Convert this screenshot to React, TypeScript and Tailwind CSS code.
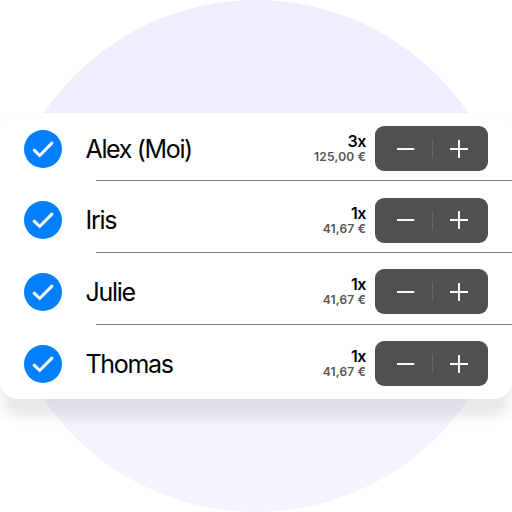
interface Participant {
  name: string;
  shares: number;
  amount: string;
  tracking: string;
}

const participants: Participant[] = [
  { name: "Alex (Moi)", shares: 3, amount: "125,00 €", tracking: "tracking-[-1.35px]" },
  { name: "Iris", shares: 1, amount: "41,67 €", tracking: "tracking-[-1.3px]" },
  { name: "Julie", shares: 1, amount: "41,67 €", tracking: "tracking-[-1.3px]" },
  { name: "Thomas", shares: 1, amount: "41,67 €", tracking: "tracking-[-1.3px]" },
];

export default function App() {
  return (
    <main className="relative flex h-[512px] w-[512px] flex-col overflow-hidden bg-white pt-[112.9px] font-['Inter',sans-serif]">
      <div className="absolute inset-0 rounded-full bg-linear-to-b from-[#efedfd] to-[#f4f4ff]" />
      <section className="relative h-[286.6px] w-full rounded-[18px] bg-white shadow-[0_20px_12px_-2px_rgba(0,0,0,0.085),0_0_2px_rgba(0,0,0,0.03)]">
        {participants.map((participant, index) => (
          <ParticipantRow
            key={participant.name}
            participant={participant}
            last={index === participants.length - 1}
          />
        ))}
      </section>
    </main>
  );
}

function ParticipantRow({
  participant,
  last,
}: {
  participant: Participant;
  last: boolean;
}) {
  return (
    <div className="h-[71.65px] pt-[13.2px]">
      <div className="flex h-[45px] items-center pr-6 pl-6">
        <CheckBadge />
        <span
          className={`ml-[23.5px] flex-1 pt-[1.5px] text-[25px] leading-none whitespace-nowrap text-black ${participant.tracking}`}
        >
          {participant.name}
        </span>
        <div className="mr-[9px] flex flex-col items-end whitespace-nowrap">
          <div className="text-[16px] leading-[16px] font-semibold tracking-[-0.4px] text-black">
            {participant.shares}x
          </div>
          <div className="text-[12px] leading-[15px] font-semibold tracking-[0.2px] text-[#555]">
            {participant.amount}
          </div>
        </div>
        <Stepper />
      </div>
      {!last && <div className="mt-[9.3px] ml-[95.5px] h-px bg-[#818181]" />}
    </div>
  );
}

function CheckBadge() {
  return (
    <svg className="h-[38px] w-[38px] shrink-0" viewBox="0 0 38 38" fill="none">
      <circle cx="19" cy="19" r="19" fill="#0080ff" />
      <path
        d="M10.2 20.2L15.7 25.5L27.9 13.1"
        stroke="white"
        strokeWidth="3"
        strokeLinecap="round"
        strokeLinejoin="miter"
      />
    </svg>
  );
}

function Stepper() {
  return (
    <div className="flex h-[45px] w-[113px] shrink-0 items-center rounded-[9px] bg-[#505050]">
      <button aria-label="Retirer" className="flex h-full flex-1 items-center pl-[22px]">
        <svg className="h-[18px] w-[18px]" viewBox="0 0 18 18" stroke="white" strokeWidth="1.9">
          <path d="M0 9H17.3" />
        </svg>
      </button>
      <span className="h-[19px] w-px bg-[#666]" />
      <button aria-label="Ajouter" className="flex h-full flex-1 items-center justify-end pr-[20px]">
        <svg className="h-[18px] w-[18px]" viewBox="0 0 18 18" stroke="white" strokeWidth="1.9">
          <path d="M0 9H18M9 0V18" />
        </svg>
      </button>
    </div>
  );
}
